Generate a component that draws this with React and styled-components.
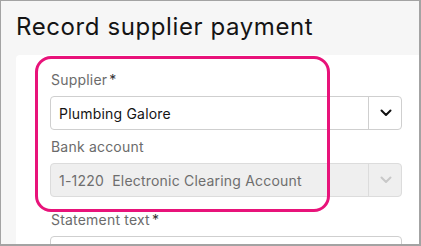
import React from 'react';
import styled, { createGlobalStyle } from 'styled-components';

const GlobalStyle = createGlobalStyle`
  html, body {
    margin: 0;
    padding: 0;
    background: #ffffff;
  }
  * {
    box-sizing: border-box;
  }
`;

const Frame = styled.div`
  position: relative;
  width: 421px;
  height: 246px;
  overflow: hidden;
  display: flex;
  flex-direction: column;
  background: #f6f6f6;
  border: 1px solid #a3a3a3;
  border-right-width: 2px;
  border-bottom-width: 2px;
  font-family: Inter, "Noto Sans", sans-serif;
`;

const Title = styled.h1`
  margin: 10px 0 12px 15px;
  font-size: 24px;
  line-height: 32px;
  font-weight: 400;
  color: #141414;
  letter-spacing: 0.6px;
`;

const Card = styled.div`
  flex: 1;
  margin-left: 15px;
  padding: 15px 17px 0 34px;
  background: #ffffff;
  border-radius: 4px 0 0 0;
  display: flex;
  flex-direction: column;
`;

const Field = styled.div`
  display: flex;
  flex-direction: column;
  gap: 6px;
  margin-bottom: ${(p) => p.$space || 0}px;
`;

const Label = styled.label`
  font-size: 14px;
  line-height: 20px;
  color: #6b6b6b;
  padding-left: 1px;
  letter-spacing: 0.2px;
`;

const Required = styled.span`
  color: #333333;
  margin-left: 2px;
`;

const SelectBox = styled.div`
  display: flex;
  height: 34px;
  border: 1px solid ${(p) => (p.$disabled ? '#dcdcdc' : '#cfcfcf')};
  border-radius: 4px;
  background: ${(p) => (p.$disabled ? '#efefef' : '#ffffff')};
`;

const Value = styled.div`
  flex: 1;
  display: flex;
  align-items: center;
  padding-left: 8px;
  font-size: 14px;
  letter-spacing: 0.2px;
  color: ${(p) => (p.$disabled ? '#6e6e6e' : '#141414')};
  white-space: pre;
`;

const Toggle = styled.div`
  width: 33px;
  display: flex;
  align-items: center;
  justify-content: center;
  padding-left: 2px;
  border-left: 1px solid ${(p) => (p.$disabled ? '#dcdcdc' : '#cfcfcf')};
`;

const TextInput = styled.div`
  height: 34px;
  border: 1px solid #cfcfcf;
  border-radius: 4px;
  background: #ffffff;
`;

const Highlight = styled.div`
  position: absolute;
  left: 34px;
  top: 55px;
  width: 295px;
  height: 156px;
  border: 3px solid #e8137a;
  border-radius: 16px;
  pointer-events: none;
`;

const Chevron = ({ color }) => (
  <svg width="12" height="8" viewBox="0 0 12 8">
    <path d="M1.5 1.5 L6 6 L10.5 1.5" fill="none" stroke={color} strokeWidth="2" strokeLinecap="round" strokeLinejoin="round" />
  </svg>
);

const Select = ({ value, disabled }) => (
  <SelectBox $disabled={disabled}>
    <Value $disabled={disabled}>{value}</Value>
    <Toggle $disabled={disabled}>
      <Chevron color={disabled ? '#c8c8c8' : '#111111'} />
    </Toggle>
  </SelectBox>
);

export default function App() {
  return (
    <>
      <GlobalStyle />
      <Frame>
        <Title>Record supplier payment</Title>
        <Card>
          <Field $space={7}>
            <Label>Supplier<Required>*</Required></Label>
            <Select value="Plumbing Galore" />
          </Field>
          <Field $space={13}>
            <Label>Bank account</Label>
            <Select value="1-1220  Electronic Clearing Account" disabled />
          </Field>
          <Field>
            <Label>Statement text<Required>*</Required></Label>
            <TextInput />
          </Field>
        </Card>
        <Highlight />
      </Frame>
    </>
  );
}
